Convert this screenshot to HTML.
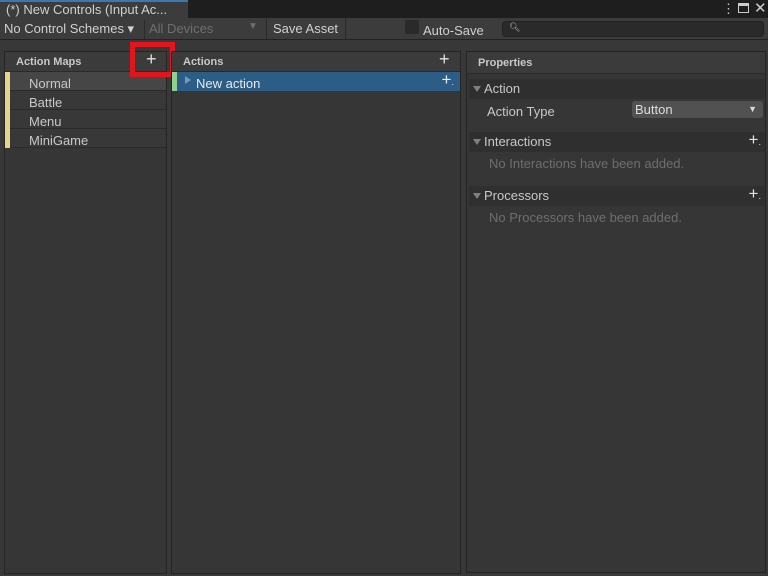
<!DOCTYPE html>
<html><head><meta charset="utf-8"><style>
*{margin:0;padding:0;box-sizing:border-box}
body{width:768px;height:576px;background:#383838;font-family:"Liberation Sans",sans-serif;color:#c8c8c8;position:relative;overflow:hidden;font-size:13px}
.a{position:absolute}
.tabbar{left:0;top:0;width:768px;height:18px;background:#1e1e1e}
.tab{left:0;top:0;width:188px;height:18px;background:#3c3c3c;border-top:2px solid #3a78b0;padding-left:6px;line-height:16px;font-size:13px;color:#d0d0d0}
.tb{left:0;top:18px;width:768px;height:22px;background:#3c3c3c;border-bottom:1px solid #232323}
.panel{background:#363636;border:1px solid #252525}
.hdr{height:20px;background:#3b3b3b;border-bottom:1px solid #2a2a2a;font-weight:bold;font-size:11px;line-height:20px;padding-left:11px;color:#c8c8c8}
.row{height:19px;line-height:19px;padding-top:2px;border-bottom:1px solid #2a2a2a;padding-left:24px;background:#383838;position:relative}
.row:before{content:"";position:absolute;left:0;top:0;width:5px;height:19px;background:#e8d48a}
.sec{background:#2f2f2f;height:20px;line-height:20px;padding-left:15px;position:relative;font-size:13px}
.tri{position:absolute;left:4px;top:7px;width:0;height:0;border-left:4px solid transparent;border-right:4px solid transparent;border-top:6px solid #808080}
.dim{color:#6e6e6e;padding-left:20px;font-size:13px}
</style></head><body>
<div class="a tabbar"></div>
<div class="a tab">(*) New Controls (Input Ac...</div>
<div class="a" style="left:722px;top:1px;font-size:13px;color:#ccc;letter-spacing:6px">⋮</div>
<div class="a" style="left:738px;top:3px;width:11px;height:10px;border:1px solid #ccc;border-top-width:3px"></div>
<div class="a" style="left:754px;top:-1px;font-size:15px;color:#ccc">✕</div>
<div class="a tb"></div>
<div class="a" style="left:4px;top:21px;color:#d0d0d0">No Control Schemes ▾</div>
<div class="a" style="left:144px;top:20px;width:120px;height:19px;border-left:1px solid #2a2a2a"></div>
<div class="a" style="left:149px;top:21px;color:#6e6e6e">All Devices</div>
<div class="a" style="left:248px;top:21px;color:#6e6e6e;font-size:10px">▼</div>
<div class="a" style="left:266px;top:18px;width:80px;height:22px;border-left:1px solid #2a2a2a;border-right:1px solid #2a2a2a;padding:3px 0 0 6px;color:#d0d0d0">Save Asset</div>
<div class="a" style="left:405px;top:20px;width:14px;height:14px;background:#2a2a2a;border-radius:2px"></div>
<div class="a" style="left:423px;top:23px;color:#d0d0d0">Auto-Save</div>
<div class="a" style="left:502px;top:21px;width:262px;height:16px;background:#2a2a2a;border:1px solid #222;border-radius:4px;font-size:9px;padding-left:6px;color:#bbb">&#x1F50D;&#xFE0E;</div>

<div class="a panel" style="left:4px;top:51px;width:163px;height:523px">
 <div class="hdr">Action Maps</div>
 <div class="row" style="background:#464646">Normal</div>
 <div class="row">Battle</div>
 <div class="row">Menu</div>
 <div class="row">MiniGame</div>
</div>
<div class="a" style="left:130px;top:42px;width:45px;height:35px;border:5px solid #e3141b"></div>
<div class="a" style="left:146px;top:49px;font-size:18px;color:#e0e0e0">+</div>

<div class="a panel" style="left:171px;top:51px;width:290px;height:523px">
 <div class="hdr">Actions</div>
 <div style="height:19px;background:#2c5d87;position:relative;line-height:19px;padding-top:2px;padding-left:24px;color:#e8e8e8">
  <div class="a" style="left:0;top:0;width:5px;height:19px;background:#8fcf8f"></div>
  <div class="a" style="left:13px;top:4px;border-top:4px solid transparent;border-bottom:4px solid transparent;border-left:6px solid #7a9ab8"></div>
  New action
  <div class="a" style="right:6px;top:-2px;font-size:17px">+<span style="font-size:9px">.</span></div>
 </div>
</div>
<div class="a" style="left:439px;top:49px;font-size:18px;color:#e0e0e0">+</div>

<div class="a panel" style="left:466px;top:51px;width:300px;height:522px">
 <div class="hdr" style="height:22px;line-height:22px">Properties</div>
 <div style="padding:5px 0 0 2px">
  <div class="sec"><div class="tri"></div>Action</div>
  <div style="height:24px;position:relative"><span class="a" style="left:18px;top:5px">Action Type</span>
   <div class="a" style="left:163px;top:2px;width:131px;height:17px;background:#515151;border-radius:3px;padding-left:3px;line-height:17px;color:#dcdcdc">Button<span class="a" style="right:6px;top:0;font-size:9px">▼</span></div></div>
  <div style="height:9px"></div>
  <div class="sec"><div class="tri"></div>Interactions<span class="a" style="right:4px;top:-2px;font-size:17px;color:#e0e0e0">+<span style="font-size:9px">.</span></span></div>
  <div class="dim" style="height:34px;line-height:24px">No Interactions have been added.</div>
  <div class="sec"><div class="tri"></div>Processors<span class="a" style="right:4px;top:-2px;font-size:17px;color:#e0e0e0">+<span style="font-size:9px">.</span></span></div>
  <div class="dim" style="height:24px;line-height:24px">No Processors have been added.</div>
 </div>
</div>
</body></html>
